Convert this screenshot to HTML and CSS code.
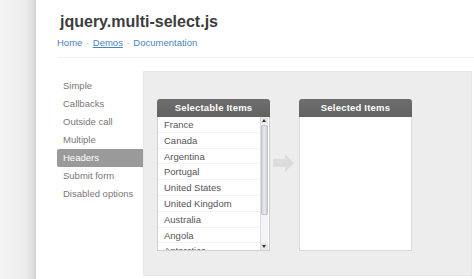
FILE: index.html
```html
<!DOCTYPE html>
<html lang="en">
<head>
  <meta charset="UTF-8">
  <meta name="viewport" content="width=device-width, initial-scale=1.0">
  <link rel="stylesheet" href="styles.css">
  <title>jquery.multi-select.js</title>
</head>
<body>
  <div class="page">
    <div class="gutter"></div>
    <div class="main">
      <div class="header">
        <h1>jquery.multi-select.js</h1>
        <div class="crumbs">
          <a href="#">Home</a>
          <span class="sep">·</span>
          <a href="#" class="current">Demos</a>
          <span class="sep">·</span>
          <a href="#">Documentation</a>
        </div>
      </div>
      <div class="content">
        <ul class="nav">
          <li>Simple</li>
          <li>Callbacks</li>
          <li>Outside call</li>
          <li>Multiple</li>
          <li class="active">Headers</li>
          <li>Submit form</li>
          <li>Disabled options</li>
        </ul>
        <div class="panel">
          <div class="ms-box">
            <div class="ms-header">Selectable Items</div>
            <div class="ms-list">
              <ul class="items">
                <li>France</li>
                <li>Canada</li>
                <li>Argentina</li>
                <li>Portugal</li>
                <li>United States</li>
                <li>United Kingdom</li>
                <li>Australia</li>
                <li>Angola</li>
                <li>Antarctica</li>
              </ul>
              <div class="scrollbar">
                <div class="sb-btn up"></div>
                <div class="sb-track">
                  <div class="sb-thumb"></div>
                </div>
                <div class="sb-btn down"></div>
              </div>
            </div>
          </div>
          <svg class="arrow" width="22" height="18" viewBox="0 0 22 18">
            <polygon points="0,5 12,5 12,0 21,9 12,18 12,13 0,13" fill="#dcdcdc"/>
          </svg>
          <div class="ms-box">
            <div class="ms-header">Selected Items</div>
            <div class="ms-list empty"></div>
          </div>
        </div>
      </div>
    </div>
  </div>
</body>
</html>
```

FILE: styles.css
```css
body {
  margin: 0;
  font-family: "Liberation Sans", Arial, sans-serif;
  background: #fff;
}

.page {
  display: flex;
  height: 279px;
  overflow: hidden;
}

.gutter {
  width: 36px;
  flex-shrink: 0;
  background: linear-gradient(to right, #f3f3f3, #ededed 70%, #dedede 92%, #d2d2d2);
}

.main {
  flex: 1;
  padding-left: 21px;
  display: flex;
  flex-direction: column;
}

.header {
  padding-top: 12px;
  padding-bottom: 8px;
  border-bottom: 1px solid #efefef;
}

h1 {
  margin: 0 0 0 3px;
  font-size: 16px;
  line-height: 20px;
  color: #3d3d3d;
}

.crumbs {
  margin-top: 5px;
  font-size: 9.5px;
  line-height: 12px;
  color: #aaa;
}

.crumbs a {
  color: #4b83c0;
  text-decoration: none;
}

.crumbs a.current {
  text-decoration: underline;
}

.crumbs .sep {
  margin: 0 1px;
}

.content {
  display: flex;
  margin-top: 13px;
  flex: 1;
}

.nav {
  list-style: none;
  margin: 0;
  padding: 6px 0 0;
  width: 86px;
  flex-shrink: 0;
}

.nav li {
  height: 18px;
  line-height: 18px;
  padding-left: 6px;
  font-size: 9.5px;
  color: #7d7575;
}

.nav li.active {
  background: #9a9a9a;
  color: #fff;
  border-radius: 2px 0 0 2px;
}

.panel {
  flex: 1;
  height: 205px;
  margin-right: 2px;
  background: #ededed;
  border: 1px solid #e6e6e6;
  box-sizing: border-box;
  padding: 27px 0 0 13px;
  display: flex;
  align-items: flex-start;
}

.ms-box {
  width: 113px;
}

.ms-header {
  height: 18px;
  line-height: 18px;
  background: linear-gradient(#6e6e6e, #626262);
  border-radius: 3px 3px 0 0;
  color: #fff;
  font-weight: bold;
  font-size: 9.5px;
  text-align: center;
  letter-spacing: 0.2px;
}

.ms-list {
  height: 134px;
  background: #fff;
  border: 1px solid #d0d0d0;
  border-top: none;
  box-sizing: border-box;
  display: flex;
  overflow: hidden;
}

.items {
  flex: 1;
  list-style: none;
  margin: 0;
  padding: 0;
}

.items li {
  height: 15.8px;
  line-height: 15.8px;
  padding-left: 6px;
  font-size: 9.5px;
  color: #555;
  border-bottom: 1px solid #f2f2f2;
  box-sizing: border-box;
}

.scrollbar {
  width: 7px;
  margin-right: 1px;
  display: flex;
  flex-direction: column;
  background: #f4f4f6;
  border-left: 1px solid #dcdcdc;
}

.sb-btn {
  height: 7px;
  position: relative;
  background: #e8e8ec;
}

.sb-btn::after {
  content: "";
  position: absolute;
  left: 1px;
  border-left: 2.5px solid transparent;
  border-right: 2.5px solid transparent;
}

.sb-btn.up::after {
  top: 2px;
  border-bottom: 3px solid #333;
}

.sb-btn.down::after {
  top: 2px;
  border-top: 3px solid #333;
}

.sb-track {
  flex: 1;
  padding: 1px 0;
}

.sb-thumb {
  height: 90px;
  background: linear-gradient(to right, #d6d6de, #e6e6ee, #d0d0d8);
  border: 1px solid #c4c4cc;
  border-radius: 1px;
  box-sizing: border-box;
}

.arrow {
  margin: 55px 4px 0 3px;
}

.empty {
  border-color: #dcdcdc;
}
```
